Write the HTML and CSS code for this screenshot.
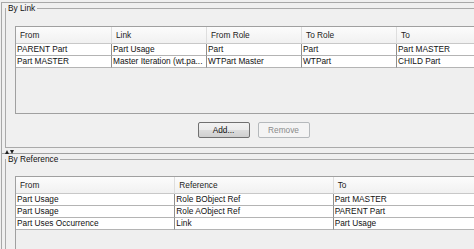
FILE: index.html
```html
<!DOCTYPE html>
<html lang="en">
<head>
  <meta charset="UTF-8">
  <title>Link Editor</title>
  <link rel="stylesheet" href="styles.css">
</head>
<body>
  <div class="frame">
    <fieldset class="group">
      <legend>By Link</legend>
      <div class="group-body">
        <div class="grid-view">
          <table class="grid">
            <thead>
              <tr><th>From</th><th>Link</th><th>From Role</th><th>To Role</th><th>To</th></tr>
            </thead>
            <tbody>
              <tr><td>PARENT Part</td><td>Part Usage</td><td>Part</td><td>Part</td><td>Part MASTER</td></tr>
              <tr><td>Part MASTER</td><td>Master Iteration (wt.pa...</td><td>WTPart Master</td><td>WTPart</td><td>CHILD Part</td></tr>
            </tbody>
          </table>
        </div>
        <div class="actions">
          <button class="btn">Add...</button>
          <button class="btn" disabled>Remove</button>
        </div>
      </div>
    </fieldset>

    <div class="splitter">
      <svg width="9" height="4" viewBox="0 0 9 4"><path d="M0 4L2 0L4 4Z M5 0L9 0L7 4Z" fill="#222"/></svg>
    </div>

    <fieldset class="group group-ref">
      <legend>By Reference</legend>
      <div class="group-body">
        <div class="grid-view tall">
          <table class="grid">
            <thead>
              <tr><th>From</th><th>Reference</th><th>To</th></tr>
            </thead>
            <tbody>
              <tr><td>Part Usage</td><td>Role BObject Ref</td><td>Part MASTER</td></tr>
              <tr><td>Part Usage</td><td>Role AObject Ref</td><td>PARENT Part</td></tr>
              <tr><td>Part Uses Occurrence</td><td>Link</td><td>Part Usage</td></tr>
            </tbody>
          </table>
        </div>
      </div>
    </fieldset>
  </div>
</body>
</html>
```

FILE: styles.css
```css
body {
  margin: 0;
  height: 249px;
  overflow: hidden;
  background-color: #f0f0f0;
  font-family: 'Liberation Sans', Arial, sans-serif;
  font-size: 8.3px;
  color: #111;
}
.frame {
  width: 505px;
  height: 300px;
  margin: 2px 0 0 1px;
  border-top: 1px solid #a8a8a8;
  border-left: 1px solid #a8a8a8;
}
.group {
  box-sizing: border-box;
  width: 497px;
  min-width: 0;
  margin: 0 0 0 3px;
  padding: 0;
  border: 1px solid #aaaaaa;
}
.group legend {
  padding: 0 2px;
  margin-left: 0;
  line-height: 10px;
}
.group-body {
  padding: 13px 9px 9px 9px;
}
.group-ref .group-body {
  padding-top: 12px;
}
.grid-view {
  box-sizing: border-box;
  height: 88px;
  border: 1px solid #a0a0a0;
  background-color: #efefef;
  overflow: hidden;
}
.grid-view.tall {
  height: 120px;
}
.grid {
  width: 100%;
  table-layout: fixed;
  border-collapse: separate;
  border-spacing: 0;
}
.grid th {
  padding: 0 4px;
  line-height: 16px;
  text-align: left;
  font-weight: normal;
  color: #222;
  background: linear-gradient(#fcfcfc, #f1f1f1);
  border-bottom: 1px solid #c8c8c8;
  border-left: 1px solid #dedede;
}
.grid td {
  padding: 0 1px;
  line-height: 11px;
  background-color: white;
  border-bottom: 1px solid #b4b4b4;
  border-left: 1px solid #8e8e8e;
  white-space: nowrap;
  overflow: hidden;
}
.grid th:first-child,
.grid td:first-child {
  border-left: 0;
}
.actions {
  display: flex;
  justify-content: center;
  gap: 8px;
  margin-top: 8px;
}
.btn {
  width: 52px;
  height: 16px;
  padding: 0;
  font: inherit;
  color: #111;
  border: 1px solid #707070;
  border-radius: 2px;
  background: linear-gradient(#f2f2f2 0%, #ebebeb 50%, #dddddd 50%, #cfcfcf 100%);
}
.btn:disabled {
  color: #8a8a8a;
  border-color: #b5b9bc;
  background: #f4f4f4;
}
.splitter {
  display: flex;
  align-items: flex-end;
  height: 5px;
  padding-left: 3px;
  border-bottom: 1px solid #a0a0a0;
}
.splitter svg {
  display: block;
  margin-bottom: -1px;
}
```
